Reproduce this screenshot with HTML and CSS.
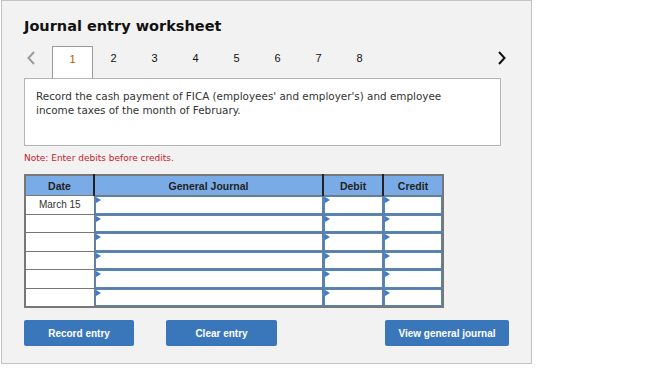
FILE: index.html
```html
<!DOCTYPE html>
<html lang="en">
<head>
    <meta charset="UTF-8">
    <meta name="viewport" content="width=device-width, initial-scale=1.0">
    <title>Journal entry worksheet</title>
    <link rel="stylesheet" href="styles.css">
</head>
<body>

<div class="worksheet">
    <h1 class="title">Journal entry worksheet</h1>

    <div class="tabs">
        <span class="arrow prev">
            <svg width="10" height="14" viewBox="0 0 10 14"><path d="M8 1 L2.5 7 L8 13" fill="none" stroke="#9c9c9c" stroke-width="2"/></svg>
        </span>
        <span class="tab active">1</span>
        <span class="tab">2</span>
        <span class="tab">3</span>
        <span class="tab">4</span>
        <span class="tab">5</span>
        <span class="tab">6</span>
        <span class="tab">7</span>
        <span class="tab">8</span>
        <span class="arrow next">
            <svg width="10" height="14" viewBox="0 0 10 14"><path d="M2 1 L7.5 7 L2 13" fill="none" stroke="#111" stroke-width="2"/></svg>
        </span>
    </div>

    <div class="question">
        <p>Record the cash payment of FICA (employees' and employer's) and employee income taxes of the month of February.</p>
    </div>

    <p class="note">Note: Enter debits before credits.</p>

    <table class="journal">
        <thead>
            <tr>
                <th class="col-date">Date</th>
                <th class="col-account">General Journal</th>
                <th class="col-amount">Debit</th>
                <th class="col-amount">Credit</th>
            </tr>
        </thead>
        <tbody>
            <tr>
                <td class="date">March 15</td>
                <td><div class="field"></div></td>
                <td><div class="field"></div></td>
                <td><div class="field"></div></td>
            </tr>
            <tr>
                <td class="date"></td>
                <td><div class="field"></div></td>
                <td><div class="field"></div></td>
                <td><div class="field"></div></td>
            </tr>
            <tr>
                <td class="date"></td>
                <td><div class="field"></div></td>
                <td><div class="field"></div></td>
                <td><div class="field"></div></td>
            </tr>
            <tr>
                <td class="date"></td>
                <td><div class="field"></div></td>
                <td><div class="field"></div></td>
                <td><div class="field"></div></td>
            </tr>
            <tr>
                <td class="date"></td>
                <td><div class="field"></div></td>
                <td><div class="field"></div></td>
                <td><div class="field"></div></td>
            </tr>
            <tr>
                <td class="date"></td>
                <td><div class="field"></div></td>
                <td><div class="field"></div></td>
                <td><div class="field"></div></td>
            </tr>
        </tbody>
    </table>

    <div class="actions">
        <button class="btn btn-record">Record entry</button>
        <button class="btn btn-clear">Clear entry</button>
        <button class="btn btn-view">View general journal</button>
    </div>
</div>

</body>
</html>
```

FILE: styles.css
```css
body {
    margin: 0;
    padding: 0;
    background-color: #fff;
    font-family: "Liberation Sans", Arial, sans-serif;
    color: #222;
}

.worksheet {
    box-sizing: border-box;
    width: 531px;
    height: 364px;
    margin-left: 1px;
    padding: 16px 0 0 22px;
    background-color: #f2f2f2;
    border: 1px solid #c3c3c3;
}

.title {
    margin: 0;
    font-family: "DejaVu Sans", Verdana, sans-serif;
    font-size: 14.5px;
    line-height: 18px;
    font-weight: bold;
    color: #111;
}

/* tab strip */
.tabs {
    display: flex;
    height: 32px;
    margin-top: 11px;
    width: 483px;
}
.tab {
    box-sizing: border-box;
    width: 41px;
    padding-top: 6px;
    text-align: center;
    font-size: 11px;
    line-height: 12px;
    color: #111;
}
.tab.active {
    background-color: #fff;
    border: 1px solid #999;
    border-bottom: none;
    color: #b35900;
}
.arrow {
    box-sizing: border-box;
    padding-top: 5px;
}
.arrow svg {
    display: block;
}
.arrow.prev {
    width: 28px;
    padding-left: 2px;
}
.arrow.next {
    margin-left: auto;
}

.question {
    box-sizing: border-box;
    width: 477px;
    height: 68px;
    padding: 11px 30px 0 11px;
    background-color: #fff;
    border: 1px solid #b5b5b5;
}
.question p {
    margin: 0;
    font-family: "DejaVu Sans", Verdana, sans-serif;
    font-size: 10.4px;
    line-height: 13.5px;
    color: #333;
}

.note {
    margin: 6px 0 0 0;
    font-family: "DejaVu Sans", Verdana, sans-serif;
    font-size: 9px;
    line-height: 12px;
    color: #c8202a;
}

/* journal table */
.journal {
    margin-top: 10px;
    border-collapse: collapse;
    border: 2px solid #777;
    font-size: 10px;
}
.journal th {
    height: 19px;
    padding: 0;
    background-color: #79ace6;
    border: 1px solid #777;
    border-left: 2px solid #222;
    font-size: 10.5px;
    font-weight: bold;
    color: #222;
}
.journal th:first-child {
    border-left: 2px solid #777;
}
.col-date {
    width: 67px;
}
.col-account {
    width: 227px;
}
.col-amount {
    width: 58px;
}
.journal td {
    height: 17.5px;
    padding: 0;
    border: 1px solid #6e7b8c;
    background-color: #fff;
}
.journal td.date {
    border-color: #777;
    text-align: center;
    color: #333;
}
.field {
    position: relative;
    box-sizing: border-box;
    height: 17.5px;
    border: 1px solid #4f86c6;
    background-color: #fff;
}
.field::before {
    content: "";
    position: absolute;
    top: 0;
    left: 0;
    border-top: 3px solid transparent;
    border-bottom: 3px solid transparent;
    border-left: 5px solid #3d7cc9;
}

.actions {
    display: flex;
    margin-top: 12px;
}
.btn {
    height: 26px;
    padding: 0;
    background-color: #3a77ba;
    border: none;
    border-radius: 2px;
    color: #fff;
    font-family: "Liberation Sans", Arial, sans-serif;
    font-size: 10px;
    font-weight: bold;
}
.btn-record {
    width: 110px;
}
.btn-clear {
    width: 111px;
    margin-left: 32px;
}
.btn-view {
    width: 124px;
    margin-left: 108px;
}
```
